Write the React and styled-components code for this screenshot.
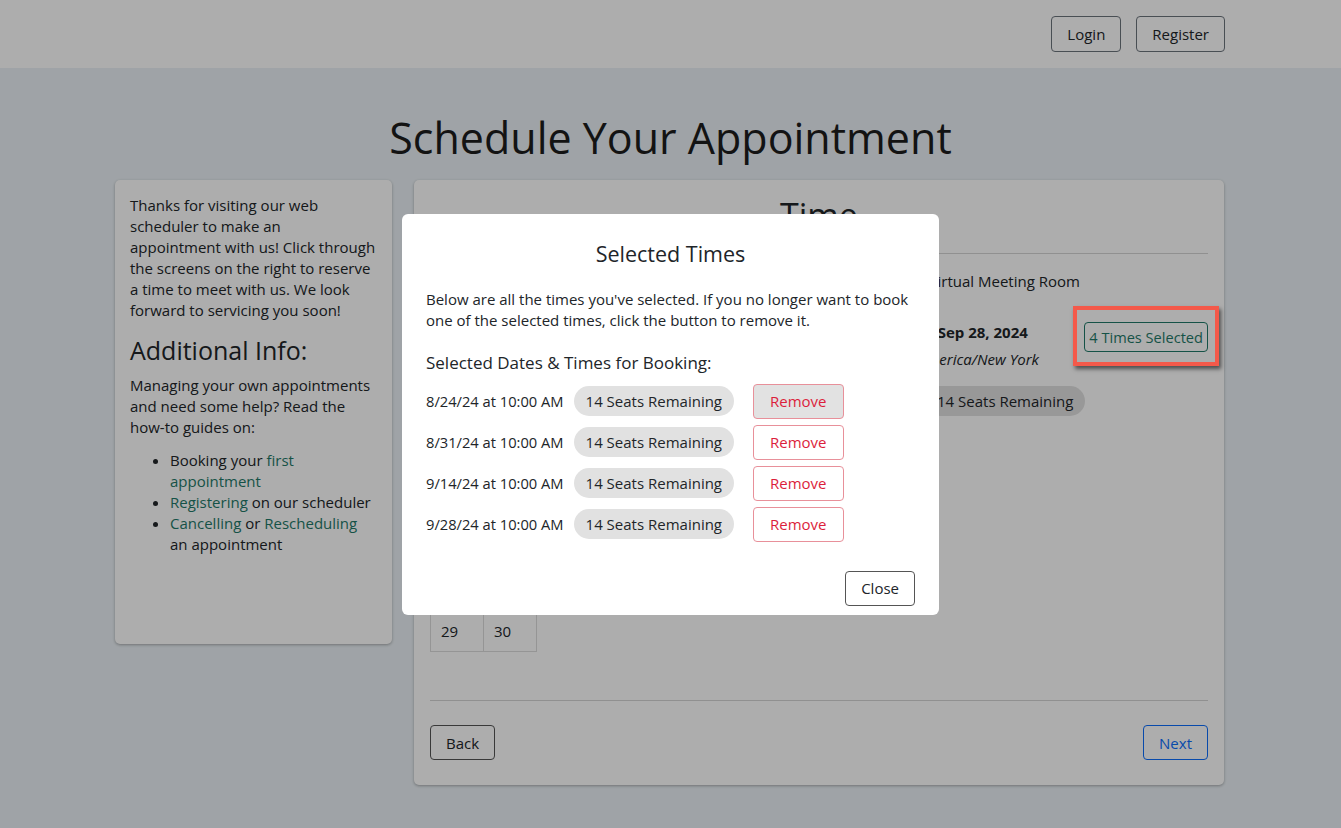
import React from "react";
import styled, { createGlobalStyle } from "styled-components";

const GlobalStyle = createGlobalStyle`
  html, body { margin: 0; padding: 0; }
  body {
    font-family: "Open Sans", "Noto Sans", sans-serif;
    font-size: 15px;
    color: #212529;
    background: #ebf1f6;
  }
  * { box-sizing: border-box; }
`;

const Page = styled.div`
  min-height: 828px;
  background: #ebf1f6;
`;

const Header = styled.header`
  height: 68px;
  background: #ffffff;
  display: flex;
  justify-content: flex-end;
  align-items: center;
  gap: 15px;
  padding-right: 116px;
`;

const OutlineButton = styled.button`
  font-family: inherit;
  font-size: ${(p) => p.$fs || 15}px;
  height: ${(p) => p.$h || 36}px;
  padding: 0 ${(p) => p.$px || 15}px;
  background: ${(p) => (p.$hover ? "#e2e2e2" : "transparent")};
  color: ${(p) => p.$color || "#212529"};
  border: 1px solid ${(p) => p.$border || "#555"};
  border-radius: 4px;
  cursor: pointer;
  white-space: nowrap;
`;

const Title = styled.h1`
  margin: 46px 0 18px;
  text-align: center;
  font-size: 43px;
  font-weight: 400;
  line-height: 48px;
  color: #1c1c1c;
`;

const Columns = styled.div`
  display: flex;
  align-items: flex-start;
  gap: 22px;
  padding-left: 115px;
`;

const Card = styled.section`
  background: #ffffff;
  border-radius: 5px;
  box-shadow: 0 1px 3px rgba(0, 0, 0, 0.3);
  width: ${(p) => p.$w}px;
  height: ${(p) => p.$h}px;
`;

const InfoCard = styled(Card)`
  padding: 15px 14px 15px 15px;
  font-size: 15px;
  line-height: 21px;
  p { margin: 0; }
`;

const InfoHeading = styled.h3`
  margin: 14px 0 10px;
  font-size: 25px;
  font-weight: 400;
  line-height: 30px;
`;

const GuideList = styled.ul`
  margin: 12px 0 0;
  padding-left: 40px;
  li { line-height: 21px; }
`;

const Link = styled.a`
  color: #1f7a69;
  text-decoration: none;
`;

const TimeCard = styled(Card)`
  display: flex;
  flex-direction: column;
  padding: 14px 16px 25px;
`;

const CardTitle = styled.h2`
  margin: 0;
  text-align: center;
  font-size: 34px;
  font-weight: 400;
  line-height: 42px;
  padding-bottom: 17px;
  border-bottom: 1px solid #d4d4d4;
`;

const TimeBody = styled.div`
  flex: 1;
  display: flex;
  gap: 20px;
  padding-top: 15px;
`;

const CalendarWrap = styled.div`
  width: 371px;
  display: flex;
  flex-direction: column;
`;

const MonthBar = styled.div`
  display: flex;
  align-items: center;
  justify-content: space-between;
  height: 40px;
  margin-top: 80px;
  margin-bottom: 10px;
  font-size: 16px;
`;

const CalGrid = styled.div`
  display: grid;
  grid-template-columns: repeat(7, 53px);
  border-left: 1px solid #dcdcdc;
  border-top: 1px solid #dcdcdc;
`;

const CalCell = styled.div`
  height: 42px;
  display: flex;
  align-items: center;
  padding-left: 10px;
  border-right: 1px solid #dcdcdc;
  border-bottom: 1px solid #dcdcdc;
  font-weight: ${(p) => (p.$head ? 600 : 400)};
`;

const Details = styled.div`
  flex: 1;
  display: flex;
  flex-direction: column;
  line-height: 21px;
  padding-top: 2px;
  padding-left: 40px;
`;

const DateRow = styled.div`
  display: flex;
  justify-content: space-between;
  align-items: flex-start;
  margin-top: 30px;
`;

const DateText = styled.div`
  display: flex;
  flex-direction: column;
  gap: 6px;
  strong { font-weight: 700; }
  em { font-style: italic; }
`;

const Highlight = styled.div`
  position: relative;
  &::after {
    content: "";
    position: absolute;
    top: -16px;
    left: -11px;
    right: -11px;
    bottom: -14px;
    border: 4px solid #f4594a;
    box-shadow: 2px 3px 4px rgba(0, 0, 0, 0.55);
    z-index: 20;
    pointer-events: none;
  }
`;

const SlotRow = styled.div`
  display: flex;
  align-items: center;
  margin-top: 16px;
  padding-left: 64px;
`;

const Pill = styled.span`
  display: inline-flex;
  align-items: center;
  height: 30px;
  padding: 0 12px;
  border-radius: 15px;
  background: #e1e1e1;
  white-space: nowrap;
`;

const Footer = styled.div`
  display: flex;
  justify-content: space-between;
  border-top: 1px solid #d4d4d4;
  padding-top: 24px;
`;

const Backdrop = styled.div`
  position: fixed;
  inset: 0;
  background: rgba(0, 0, 0, 0.32);
  z-index: 10;
`;

const ModalLayer = styled.div`
  position: fixed;
  inset: 0;
  z-index: 30;
  display: flex;
  align-items: center;
  justify-content: center;
`;

const Modal = styled.div`
  width: 537px;
  background: #ffffff;
  border-radius: 6px;
  padding: 25px 24px 9px;
  display: flex;
  flex-direction: column;
`;

const ModalTitle = styled.h4`
  margin: 0 0 20px;
  text-align: center;
  font-size: 21.5px;
  font-weight: 400;
  line-height: 30px;
`;

const ModalText = styled.p`
  margin: 0 0 20px;
  line-height: 21px;
`;

const SubHeading = styled.h5`
  margin: 0 0 9px;
  font-size: 17px;
  font-weight: 400;
  line-height: 24px;
`;

const SelList = styled.div`
  display: flex;
  flex-direction: column;
  gap: 6px;
`;

const SelRow = styled.div`
  display: flex;
  align-items: center;
  height: 35px;
  gap: 10px;
`;

const SelDate = styled.span`
  font-size: 14.7px;
  white-space: nowrap;
`;

const RemoveButton = styled(OutlineButton)`
  margin-left: 9px;
`;

const ModalFooter = styled.div`
  display: flex;
  justify-content: flex-end;
  margin-top: 29px;
`;

const selected = ["8/24/24", "8/31/24", "9/14/24", "9/28/24"];

const weekdays = ["Su", "Mo", "Tu", "We", "Th", "Fr", "Sa"];
const days = Array.from({ length: 30 }, (_, i) => i + 1);

export default function App() {
  return (
    <Page>
      <GlobalStyle />
      <Header>
        <OutlineButton $border="#6c757d">Login</OutlineButton>
        <OutlineButton $border="#6c757d">Register</OutlineButton>
      </Header>
      <Title>Schedule Your Appointment</Title>
      <Columns>
        <InfoCard $w={277} $h={464}>
          <p>
            Thanks for visiting our web
            <br />
            scheduler to make an
            <br />
            appointment with us! Click through
            <br />
            the screens on the right to reserve
            <br />
            a time to meet with us. We look
            <br />
            forward to servicing you soon!
          </p>
          <InfoHeading>Additional Info:</InfoHeading>
          <p>
            Managing your own appointments and need some help? Read the how-to
            guides on:
          </p>
          <GuideList>
            <li>
              Booking your <Link href="#">first appointment</Link>
            </li>
            <li>
              <Link href="#">Registering</Link> on our scheduler
            </li>
            <li>
              <Link href="#">Cancelling</Link> or{" "}
              <Link href="#">Rescheduling</Link>
              <br />
              an appointment
            </li>
          </GuideList>
        </InfoCard>
        <TimeCard $w={810} $h={605}>
          <CardTitle>Time</CardTitle>
          <TimeBody>
            <CalendarWrap>
              <MonthBar>
                <span>‹</span>
                <span>September 2024</span>
                <span>›</span>
              </MonthBar>
              <CalGrid>
                {weekdays.map((d) => (
                  <CalCell key={d} $head>
                    {d}
                  </CalCell>
                ))}
                {days.map((d) => (
                  <CalCell key={d}>{d}</CalCell>
                ))}
              </CalGrid>
            </CalendarWrap>
            <Details>
              <div>Location: Virtual Meeting Room</div>
              <DateRow>
                <DateText>
                  <strong>Selection: Sep 28, 2024</strong>
                  <em>In Zone: America/New York</em>
                </DateText>
                <Highlight>
                  <OutlineButton
                    $h={30}
                    $px={4}
                    $fs={14.6}
                    $color="#1f7a69"
                    $border="#1f7a69"
                  >
                    4 Times Selected
                  </OutlineButton>
                </Highlight>
              </DateRow>
              <SlotRow>
                <Pill>14 Seats Remaining</Pill>
              </SlotRow>
            </Details>
          </TimeBody>
          <Footer>
            <OutlineButton $h={35} $px={15} $border="#555">
              Back
            </OutlineButton>
            <OutlineButton $h={35} $px={15} $border="#0d6efd" $color="#0d6efd">
              Next
            </OutlineButton>
          </Footer>
        </TimeCard>
      </Columns>
      <Backdrop />
      <ModalLayer>
        <Modal>
          <ModalTitle>Selected Times</ModalTitle>
          <ModalText>
            Below are all the times you've selected. If you no longer want to
            book one of the selected times, click the button to remove it.
          </ModalText>
          <SubHeading>Selected Dates &amp; Times for Booking:</SubHeading>
          <SelList>
            {selected.map((d, i) => (
              <SelRow key={d}>
                <SelDate>{d} at 10:00 AM</SelDate>
                <Pill>14 Seats Remaining</Pill>
                <RemoveButton
                  $h={35}
                  $px={16}
                  $border="#e8909a"
                  $color="#dc1e3c"
                  $hover={i === 0}
                >
                  Remove
                </RemoveButton>
              </SelRow>
            ))}
          </SelList>
          <ModalFooter>
            <OutlineButton $h={35} $px={15} $border="#555">
              Close
            </OutlineButton>
          </ModalFooter>
        </Modal>
      </ModalLayer>
    </Page>
  );
}
